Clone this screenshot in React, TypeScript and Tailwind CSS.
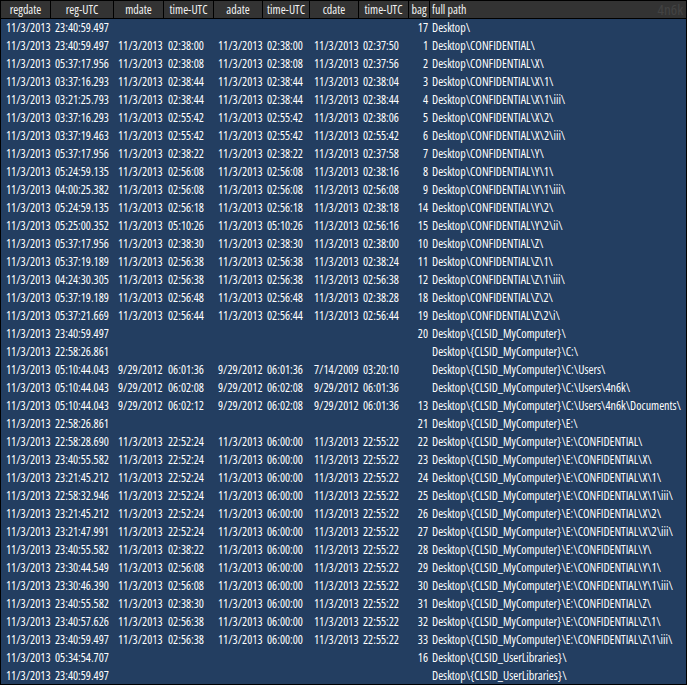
import React from "react";

const headers = ["regdate", "reg-UTC", "mdate", "time-UTC", "adate", "time-UTC", "cdate", "time-UTC", "bag", "full path"];

const D = "11/3/2013";
const CM = "Desktop\\CONFIDENTIAL\\";
const MC = "Desktop\\{CLSID_MyComputer}\\";
const ME = "Desktop\\{CLSID_MyComputer}\\E:\\CONFIDENTIAL\\";

type R = [string, string, string, string, string, string, string, string, string, string];

const rows: R[] = [
  [D, "23:40:59.497", "", "", "", "", "", "", "17", "Desktop\\"],
  [D, "23:40:59.497", D, "02:38:00", D, "02:38:00", D, "02:37:50", "1", CM],
  [D, "05:37:17.956", D, "02:38:08", D, "02:38:08", D, "02:37:56", "2", CM + "X\\"],
  [D, "03:37:16.293", D, "02:38:44", D, "02:38:44", D, "02:38:04", "3", CM + "X\\1\\"],
  [D, "03:21:25.793", D, "02:38:44", D, "02:38:44", D, "02:38:44", "4", CM + "X\\1\\iii\\"],
  [D, "03:37:16.293", D, "02:55:42", D, "02:55:42", D, "02:38:06", "5", CM + "X\\2\\"],
  [D, "03:37:19.463", D, "02:55:42", D, "02:55:42", D, "02:55:42", "6", CM + "X\\2\\iii\\"],
  [D, "05:37:17.956", D, "02:38:22", D, "02:38:22", D, "02:37:58", "7", CM + "Y\\"],
  [D, "05:24:59.135", D, "02:56:08", D, "02:56:08", D, "02:38:16", "8", CM + "Y\\1\\"],
  [D, "04:00:25.382", D, "02:56:08", D, "02:56:08", D, "02:56:08", "9", CM + "Y\\1\\iii\\"],
  [D, "05:24:59.135", D, "02:56:18", D, "02:56:18", D, "02:38:18", "14", CM + "Y\\2\\"],
  [D, "05:25:00.352", D, "05:10:26", D, "05:10:26", D, "02:56:16", "15", CM + "Y\\2\\ii\\"],
  [D, "05:37:17.956", D, "02:38:30", D, "02:38:30", D, "02:38:00", "10", CM + "Z\\"],
  [D, "05:37:19.189", D, "02:56:38", D, "02:56:38", D, "02:38:24", "11", CM + "Z\\1\\"],
  [D, "04:24:30.305", D, "02:56:38", D, "02:56:38", D, "02:56:38", "12", CM + "Z\\1\\iii\\"],
  [D, "05:37:19.189", D, "02:56:48", D, "02:56:48", D, "02:38:28", "18", CM + "Z\\2\\"],
  [D, "05:37:21.669", D, "02:56:44", D, "02:56:44", D, "02:56:44", "19", CM + "Z\\2\\i\\"],
  [D, "23:40:59.497", "", "", "", "", "", "", "20", MC],
  [D, "22:58:26.861", "", "", "", "", "", "", "", MC + "C:\\"],
  [D, "05:10:44.043", "9/29/2012", "06:01:36", "9/29/2012", "06:01:36", "7/14/2009", "03:20:10", "", MC + "C:\\Users\\"],
  [D, "05:10:44.043", "9/29/2012", "06:02:08", "9/29/2012", "06:02:08", "9/29/2012", "06:01:36", "", MC + "C:\\Users\\4n6k\\"],
  [D, "05:10:44.043", "9/29/2012", "06:02:12", "9/29/2012", "06:02:08", "9/29/2012", "06:01:36", "13", MC + "C:\\Users\\4n6k\\Documents\\"],
  [D, "22:58:26.861", "", "", "", "", "", "", "21", MC + "E:\\"],
  [D, "22:58:28.690", D, "22:52:24", D, "06:00:00", D, "22:55:22", "22", ME],
  [D, "23:40:55.582", D, "22:52:24", D, "06:00:00", D, "22:55:22", "23", ME + "X\\"],
  [D, "23:21:45.212", D, "22:52:24", D, "06:00:00", D, "22:55:22", "24", ME + "X\\1\\"],
  [D, "22:58:32.946", D, "22:52:24", D, "06:00:00", D, "22:55:22", "25", ME + "X\\1\\iii\\"],
  [D, "23:21:45.212", D, "22:52:24", D, "06:00:00", D, "22:55:22", "26", ME + "X\\2\\"],
  [D, "23:21:47.991", D, "22:52:24", D, "06:00:00", D, "22:55:22", "27", ME + "X\\2\\iii\\"],
  [D, "23:40:55.582", D, "02:38:22", D, "06:00:00", D, "22:55:22", "28", ME + "Y\\"],
  [D, "23:30:44.549", D, "02:56:08", D, "06:00:00", D, "22:55:22", "29", ME + "Y\\1\\"],
  [D, "23:30:46.390", D, "02:56:08", D, "06:00:00", D, "22:55:22", "30", ME + "Y\\1\\iii\\"],
  [D, "23:40:55.582", D, "02:38:30", D, "06:00:00", D, "22:55:22", "31", ME + "Z\\"],
  [D, "23:40:57.626", D, "02:56:38", D, "06:00:00", D, "22:55:22", "32", ME + "Z\\1\\"],
  [D, "23:40:59.497", D, "02:56:38", D, "06:00:00", D, "22:55:22", "33", ME + "Z\\1\\iii\\"],
  [D, "05:34:54.707", "", "", "", "", "", "", "16", "Desktop\\{CLSID_UserLibraries}\\"],
  [D, "23:40:59.497", "", "", "", "", "", "", "", "Desktop\\{CLSID_UserLibraries}\\"],
];

const grid = "grid grid-cols-[50px_63px_50px_50px_49px_47px_49px_50px_21px_1fr]";

export default function App() {
  return (
    <div className="w-[687px] h-[685px] overflow-hidden border border-black bg-[#233e61] font-['Open_Sans',sans-serif] [font-stretch:condensed] font-medium text-[12px] text-white">
      <div className={`${grid} relative h-[18px] bg-[#333333] border-b border-black text-[#f2f2f2]`}>
        {headers.map((h, i) => (
          <div
            key={i}
            className={`flex items-center justify-center whitespace-nowrap overflow-hidden leading-none ${i < 9 ? "border-r border-black" : "justify-start pl-[2px]"}`}
          >
            {h}
          </div>
        ))}
        <div className="absolute right-[3px] top-0 h-full flex items-center text-[15px] text-[#434343] leading-none">4n6k</div>
      </div>
      {rows.map((r, ri) => (
        <div key={ri} className={`${grid} h-[18px] items-center leading-none`}>
          {r.map((c, ci) => (
            <div
              key={ci}
              className={`whitespace-nowrap ${ci === 8 ? "text-right pr-[2px]" : ci === 9 ? "pl-[2px]" : ci === 0 ? "pl-[5px]" : "pl-[4px]"}`}
            >
              {c}
            </div>
          ))}
        </div>
      ))}
    </div>
  );
}
